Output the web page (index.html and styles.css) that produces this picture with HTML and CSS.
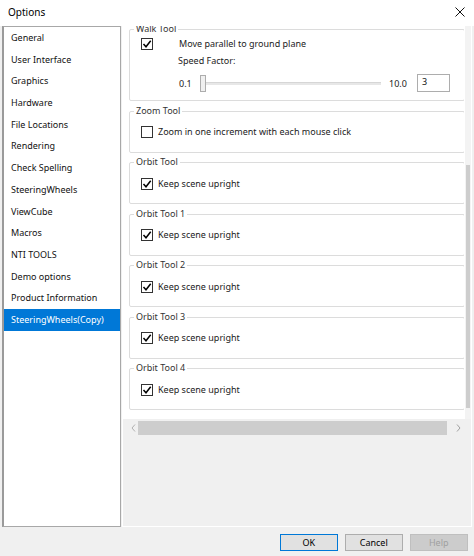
FILE: index.html
```html
<!DOCTYPE html>
<html>
<head>
<meta charset="utf-8">
<link rel="stylesheet" href="styles.css">
</head>
<body>
<div class="window">
  <div class="titlebar">
    <span class="title">Options</span>
    <svg class="close" width="10" height="10" viewBox="0 0 10 10"><path d="M0.5 0.5 L9.5 9.5 M9.5 0.5 L0.5 9.5" stroke="#111" stroke-width="1" fill="none"/></svg>
  </div>
  <div class="main">
    <ul class="sidebar">
      <li>General</li>
      <li>User Interface</li>
      <li>Graphics</li>
      <li>Hardware</li>
      <li>File Locations</li>
      <li>Rendering</li>
      <li>Check Spelling</li>
      <li>SteeringWheels</li>
      <li>ViewCube</li>
      <li>Macros</li>
      <li>NTI TOOLS</li>
      <li>Demo options</li>
      <li>Product Information</li>
      <li class="selected">SteeringWheels(Copy)</li>
    </ul>
    <div class="content">
      <div class="scroller">
        <div class="viewport">
          <div class="group walk">
            <div class="legend">Walk Tool</div>
            <div class="walk-row">
              <span class="cb checked"><svg width="10" height="10" viewBox="0 0 10 10"><path d="M1.5 5 L4 7.8 L8.7 1.8" stroke="#000" stroke-width="1.5" fill="none"/></svg></span>
              <span class="walk-text">Move parallel to ground plane</span>
            </div>
            <div class="speed-label">Speed Factor:</div>
            <div class="slider-row">
              <span class="min">0.1</span>
              <span class="slider"><span class="thumb"></span><span class="track"></span></span>
              <span class="max">10.0</span>
              <span class="input">3</span>
            </div>
          </div>
          <div class="group">
            <div class="legend">Zoom Tool</div>
            <div class="row"><span class="cb"></span><span class="text">Zoom in one increment with each mouse click</span></div>
          </div>
          <div class="group">
            <div class="legend">Orbit Tool</div>
            <div class="row"><span class="cb checked"><svg width="10" height="10" viewBox="0 0 10 10"><path d="M1.5 5 L4 7.8 L8.7 1.8" stroke="#000" stroke-width="1.5" fill="none"/></svg></span><span class="text">Keep scene upright</span></div>
          </div>
          <div class="group">
            <div class="legend">Orbit Tool 1</div>
            <div class="row"><span class="cb checked"><svg width="10" height="10" viewBox="0 0 10 10"><path d="M1.5 5 L4 7.8 L8.7 1.8" stroke="#000" stroke-width="1.5" fill="none"/></svg></span><span class="text">Keep scene upright</span></div>
          </div>
          <div class="group">
            <div class="legend">Orbit Tool 2</div>
            <div class="row"><span class="cb checked"><svg width="10" height="10" viewBox="0 0 10 10"><path d="M1.5 5 L4 7.8 L8.7 1.8" stroke="#000" stroke-width="1.5" fill="none"/></svg></span><span class="text">Keep scene upright</span></div>
          </div>
          <div class="group">
            <div class="legend">Orbit Tool 3</div>
            <div class="row"><span class="cb checked"><svg width="10" height="10" viewBox="0 0 10 10"><path d="M1.5 5 L4 7.8 L8.7 1.8" stroke="#000" stroke-width="1.5" fill="none"/></svg></span><span class="text">Keep scene upright</span></div>
          </div>
          <div class="group">
            <div class="legend">Orbit Tool 4</div>
            <div class="row"><span class="cb checked"><svg width="10" height="10" viewBox="0 0 10 10"><path d="M1.5 5 L4 7.8 L8.7 1.8" stroke="#000" stroke-width="1.5" fill="none"/></svg></span><span class="text">Keep scene upright</span></div>
          </div>
        </div>
        <div class="vscroll"><div class="vthumb"></div></div>
      </div>
      <div class="hscroll">
        <svg class="arrow" width="5" height="8" viewBox="0 0 5 8"><path d="M4 0.5 L1 4 L4 7.5" stroke="#b0b0b0" fill="none"/></svg>
        <div class="hthumb"></div>
        <svg class="arrow" width="5" height="8" viewBox="0 0 5 8"><path d="M1 0.5 L4 4 L1 7.5" stroke="#a0a0a0" fill="none"/></svg>
      </div>
    </div>
  </div>
  <div class="footer">
    <button class="btn ok">OK</button>
    <button class="btn">Cancel</button>
    <button class="btn disabled">Help</button>
  </div>
</div>
</body>
</html>
```
FILE: styles.css
```css
* { box-sizing: border-box; }
html, body { margin: 0; padding: 0; }
body {
  width: 474px;
  height: 556px;
  overflow: hidden;
  background: #f0f0f0;
  font-family: "Noto Sans", "Open Sans", sans-serif;
  font-size: 9px;
  color: #1a1a1a;
}
.window { width: 474px; height: 556px; display: flex; flex-direction: column; }
.titlebar {
  height: 26px;
  background: #fff;
  display: flex;
  align-items: center;
  justify-content: space-between;
  padding: 0 9px 2px 8px;
}
.title { font-size: 10px; color: #000; }
.main {
  height: 501px;
  display: flex;
  padding-left: 2px;
  gap: 1px;
}
.sidebar {
  list-style: none;
  margin: 0;
  padding: 0;
  width: 119px;
  background: #fff;
  border: 1px solid #a8a8a8;
  border-left: 2px solid #9a9a9a;
}
.sidebar li {
  height: 21.7px;
  line-height: 21.7px;
  padding-left: 7px;
  color: #111;
  white-space: nowrap;
}
.sidebar li.selected { background: #0078d7; color: #fff; }
.content {
  width: 350px;
  border: 1px solid #fff;
  border-top: 0;
  display: flex;
  flex-direction: column;
  background: #f0f0f0;
}
.scroller { height: 393px; display: flex; background: #fff; }
.viewport { width: 342px; overflow: hidden; background: #fff; }
.vscroll { flex: 1; background: #f3f3f3; padding: 139px 1px 0 1px; border-left: 1px solid #fff; }
.vthumb { width: 4px; height: 243px; background: #cdcdcd; }
.group {
  margin: 9.5px 0 0 6px;
  width: 336px;
  height: 42px;
  border: 1px solid #dcdcdc;
  border-radius: 2px;
  padding: 0 0 0 11px;
  background: #fff;
}
.group.walk { margin-top: 3px; height: 72px; }
.legend {
  margin: -7px 0 0 -7px;
  height: 12px;
  line-height: 12px;
  padding: 0 2px;
  background: #fff;
  width: fit-content;
  color: #333;
}
.row { margin-top: 9.5px; height: 12px; display: flex; align-items: center; gap: 5px; }
.cb {
  width: 12px;
  height: 12px;
  border: 1px solid #333;
  background: #fff;
  display: flex;
  align-items: center;
  justify-content: center;
}
.text, .walk-text { line-height: 12px; color: #222; }
.walk-row { margin-top: 3px; height: 12px; display: flex; align-items: center; gap: 26px; }
.speed-label { margin: 5px 0 0 37px; line-height: 12px; height: 12px; color: #222; }
.slider-row { margin: 7px 0 0 38px; height: 18px; display: flex; align-items: center; }
.min { width: 21px; color: #222; }
.slider { width: 182px; height: 18px; display: flex; align-items: center; }
.thumb { width: 6px; height: 17px; border: 1px solid #adadad; background: #f0f0f0; }
.track { width: 175px; height: 3px; background: #e7e7e7; border-top: 1px solid #d6d6d6; }
.max { margin-left: 7px; width: 28px; color: #222; }
.input {
  width: 33px;
  height: 18px;
  border: 1px solid #adadad;
  background: #fff;
  padding-left: 4px;
  line-height: 14px;
  color: #111;
}
.hscroll {
  height: 18px;
  margin-left: 5px;
  width: 336px;
  display: flex;
  align-items: center;
  background: #f0f0f0;
}
.hscroll .arrow:first-child { margin: 0 2px 0 3px; }
.hscroll .arrow:last-child { margin-left: 9px; }
.hthumb { width: 309px; height: 14px; background: #cdcdcd; }
.footer {
  flex: 1;
  display: flex;
  justify-content: flex-end;
  align-items: flex-start;
  padding: 7px 6px 0 0;
  gap: 6.5px;
}
.btn {
  width: 58.5px;
  height: 17px;
  padding: 0;
  font-family: "Noto Sans", "Open Sans", sans-serif;
  font-size: 9px;
  background: #e1e1e1;
  border: 1px solid #adadad;
  color: #000;
  line-height: 14px;
}
.btn.ok { border: 1px solid #0078d7; }
.btn.disabled { background: #cccccc; border-color: #bfbfbf; color: #a0a0a0; }
```
